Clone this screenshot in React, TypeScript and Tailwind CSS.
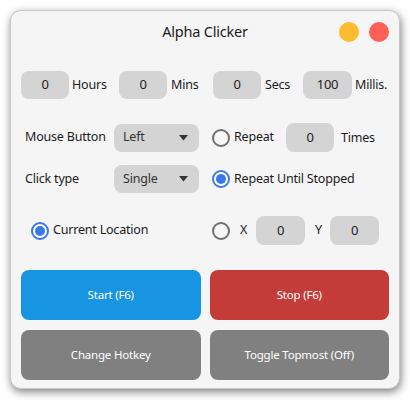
import React from "react";

const font = { fontFamily: '"Noto Sans", "Open Sans", sans-serif' };

function Radio({ checked }: { checked?: boolean }) {
  return checked ? (
    <div className="w-[18px] h-[18px] rounded-full border-2 border-[#3a78e8] flex items-center justify-center bg-white shrink-0">
      <div className="w-[10px] h-[10px] rounded-full bg-[#3a78e8]" />
    </div>
  ) : (
    <div className="w-[18px] h-[18px] rounded-full border-2 border-[#707070] bg-[#f7f7f7] shrink-0" />
  );
}

function Box({ v, w = "w-12", h = "h-7" }: { v: string; w?: string; h?: string }) {
  return (
    <div className={`${w} ${h} rounded-lg bg-[#d4d4d4] flex items-center justify-center text-[13px] text-[#222] shrink-0`}>
      {v}
    </div>
  );
}

function Drop({ v }: { v: string }) {
  return (
    <div className="w-[85px] h-7 rounded-lg bg-[#d4d4d4] flex items-center justify-between pl-[9px] pr-[11px] text-[12.5px] text-[#333] shrink-0">
      <span>{v}</span>
      <svg width="9" height="6" viewBox="0 0 9 6">
        <path d="M0 0 H9 L4.5 5.5 Z" fill="#333" />
      </svg>
    </div>
  );
}

export default function App() {
  return (
    <div className="w-[410px] h-[400px] bg-white p-[10px]" style={font}>
      <div className="w-[390px] h-[379px] bg-[#f5f5f5] rounded-[11px] border border-[#c8c8c8] shadow-[1px_3px_9px_rgba(0,0,0,0.5)] flex flex-col text-[#1b1b1b] tracking-[-0.2px]">
        <div className="relative h-[41px] flex items-center justify-center">
          <span className="text-[14.5px] text-[#1b1b1b]">Alpha Clicker</span>
          <div className="absolute right-[10px] top-[11px] flex gap-[10px]">
            <div className="w-5 h-5 rounded-full bg-[#febc2e]" />
            <div className="w-5 h-5 rounded-full bg-[#ff5f57]" />
          </div>
        </div>

        <div className="px-[10px] flex flex-col">
          <div className="mt-[19px] flex items-center text-[12.5px]">
            <div className="w-[98px] flex items-center gap-[3px]">
              <Box v="0" />
              <span>Hours</span>
            </div>
            <div className="w-[94px] flex items-center gap-[4px]">
              <Box v="0" />
              <span>Mins</span>
            </div>
            <div className="w-[90px] flex items-center gap-[4px]">
              <Box v="0" />
              <span>Secs</span>
            </div>
            <div className="flex items-center gap-[3px]">
              <Box v="100" w="w-[49px]" />
              <span>Millis.</span>
            </div>
          </div>

          <div className="mt-[24px] grid grid-cols-[191px_1fr] text-[12.5px]">
            <div className="flex items-center">
              <span className="w-[93px] pl-[4px]">Mouse Button</span>
              <Drop v="Left" />
            </div>
            <div className="flex items-center">
              <Radio />
              <span className="ml-[4px] w-[52px]">Repeat</span>
              <Box v="0" h="h-[29px]" />
              <span className="ml-[7px] mt-[2px]">Times</span>
            </div>
          </div>

          <div className="mt-[13px] grid grid-cols-[191px_1fr] text-[12.5px]">
            <div className="flex items-center">
              <span className="w-[93px] pl-[4px]">Click type</span>
              <Drop v="Single" />
            </div>
            <div className="flex items-center">
              <Radio checked />
              <span className="ml-[4px]">Repeat Until Stopped</span>
            </div>
          </div>

          <div className="mt-[23px] grid grid-cols-[191px_1fr] text-[12.5px]">
            <div className="flex items-center pl-[10px]">
              <Radio checked />
              <span className="ml-[4px]">Current Location</span>
            </div>
            <div className="flex items-center">
              <Radio />
              <span className="ml-[10px] w-[16px]">X</span>
              <Box v="0" w="w-[49px]" h="h-[29px]" />
              <span className="ml-[10px] w-[15px]">Y</span>
              <Box v="0" w="w-[49px]" h="h-[29px]" />
            </div>
          </div>

          <div className="mt-[25px] grid grid-cols-2 gap-x-[9px] gap-y-[10px] text-[11.5px] text-white">
            <button className="h-[50px] rounded-lg bg-[#1794e2]">Start (F6)</button>
            <button className="h-[50px] rounded-lg bg-[#c43c37]">Stop (F6)</button>
            <button className="h-[50px] rounded-lg bg-[#808080]">Change Hotkey</button>
            <button className="h-[50px] rounded-lg bg-[#808080]">Toggle Topmost (Off)</button>
          </div>
        </div>
      </div>
    </div>
  );
}
